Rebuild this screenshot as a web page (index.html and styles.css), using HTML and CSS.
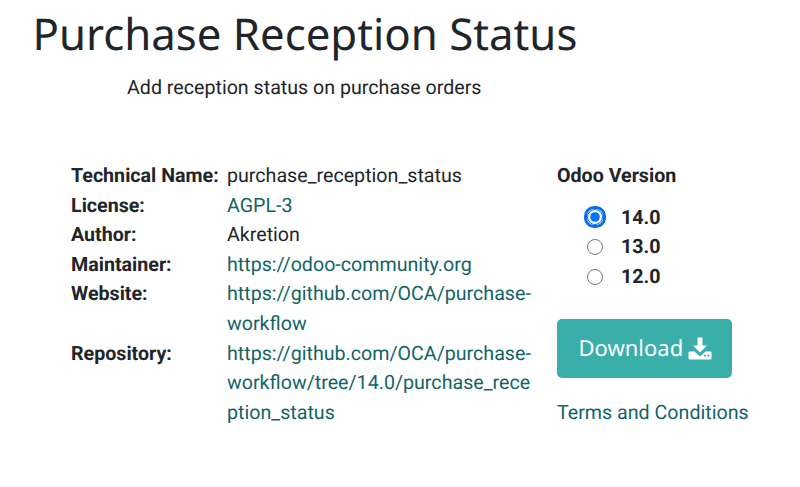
FILE: index.html
```html
<!DOCTYPE html>
<html lang="en">
<head>
<meta charset="utf-8">
<title>Purchase Reception Status</title>
<link rel="stylesheet" href="styles.css">
</head>
<body>
<header class="head">
  <h1 class="title">Purchase Reception Status</h1>
  <p class="summary">Add reception status on purchase orders</p>
</header>
<main class="content">
  <table class="info">
    <tr><th>Technical Name:</th><td>purchase_reception_status</td></tr>
    <tr><th>License:</th><td><a href="#">AGPL-3</a></td></tr>
    <tr><th>Author:</th><td>Akretion</td></tr>
    <tr><th>Maintainer:</th><td><a href="#">https://odoo-community.org</a></td></tr>
    <tr><th>Website:</th><td><a href="#">https://github.com/OCA/purchase-workflow</a></td></tr>
    <tr><th>Repository:</th><td><a href="#">https://github.com/OCA/purchase-workflow/tree/14.0/purchase_reception_status</a></td></tr>
  </table>
  <aside class="side">
    <div class="side-title">Odoo Version</div>
    <div class="versions">
      <label class="version"><span class="radio-box focus"><input type="radio" name="v" class="radio" checked></span><span>14.0</span></label>
      <label class="version"><span class="radio-box"><input type="radio" name="v" class="radio"></span><span>13.0</span></label>
      <label class="version"><span class="radio-box"><input type="radio" name="v" class="radio"></span><span>12.0</span></label>
    </div>
    <a class="download" href="#">Download
      <svg class="dl-icon" viewBox="0 0 24 24" width="24" height="24" aria-hidden="true"><path fill="#fff" d="M9.500 0.500h5v8h4.500L12 15.500 5 8.500h4.500z"/><path fill="#fff" fill-rule="evenodd" d="M1.500 14.500h5L12 19.500l5.500-5h5a1 1 0 0 1 1 1v6a1 1 0 0 1-1 1h-21a1 1 0 0 1-1-1v-6a1 1 0 0 1 1-1zM17 17.500a1.100 1.100 0 1 0 0 2.200 1.100 1.100 0 0 0 0-2.200zM20.500 17.500a1.100 1.100 0 1 0 0 2.200 1.100 1.100 0 0 0 0-2.200z"/></svg>
    </a>
    <a class="terms" href="#">Terms and Conditions</a>
  </aside>
</main>
</body>
</html>
```
FILE: styles.css
```css
html, body { margin: 0; padding: 0; background: #fff; }
body {
  width: 800px;
  height: 487px;
  overflow: hidden;
  font-family: Roboto, sans-serif;
  font-size: 19.650px;
  line-height: 29.600px;
  color: #212529;
  text-rendering: geometricPrecision;
}
.head { padding: 3px 0 0 32.500px; }
.title {
  margin: 0;
  font-family: "Noto Sans", sans-serif;
  font-weight: 400;
  font-size: 43.750px;
  line-height: 60px;
}
.summary { margin: 10px 0 0 94.500px; }
.content { display: flex; padding: 58.500px 0 0 71px; }
.info { border-collapse: collapse; width: 462px; flex: none; table-layout: fixed; align-self: flex-start; }
.info th { width: 156px; padding: 0; text-align: left; vertical-align: top; font-weight: 700; }
.info td { padding: 0; overflow-wrap: anywhere; vertical-align: top; }
.info a, .terms { color: #116466; text-decoration: none; }
.side { margin-left: 24px; display: flex; flex-direction: column; align-items: flex-start; }
.side-title { font-weight: 700; }
.versions { margin: 12px 0 0 30px; }
.version { display: flex; align-items: center; gap: 18px; font-weight: 700; }
.radio-box { display: flex; width: 16px; height: 16px; border-radius: 7px; }
.radio { width: 16px; height: 16px; margin: 0; accent-color: #0075ff; }
.focus { outline: 3px solid #0f6fe0; outline-offset: 0; }
.download {
  margin-top: 28px;
  display: flex;
  align-items: center;
  gap: 5px;
  width: 175px;
  height: 59px;
  box-sizing: border-box;
  padding-left: 21.500px;
  background: #3aafa9;
  border-radius: 5px;
  color: #fff;
  font-size: 22px;
  text-decoration: none;
  font-family: "Noto Sans", sans-serif;
}
.dl-icon { flex: none; }
.terms { margin-top: 20px; }
```
